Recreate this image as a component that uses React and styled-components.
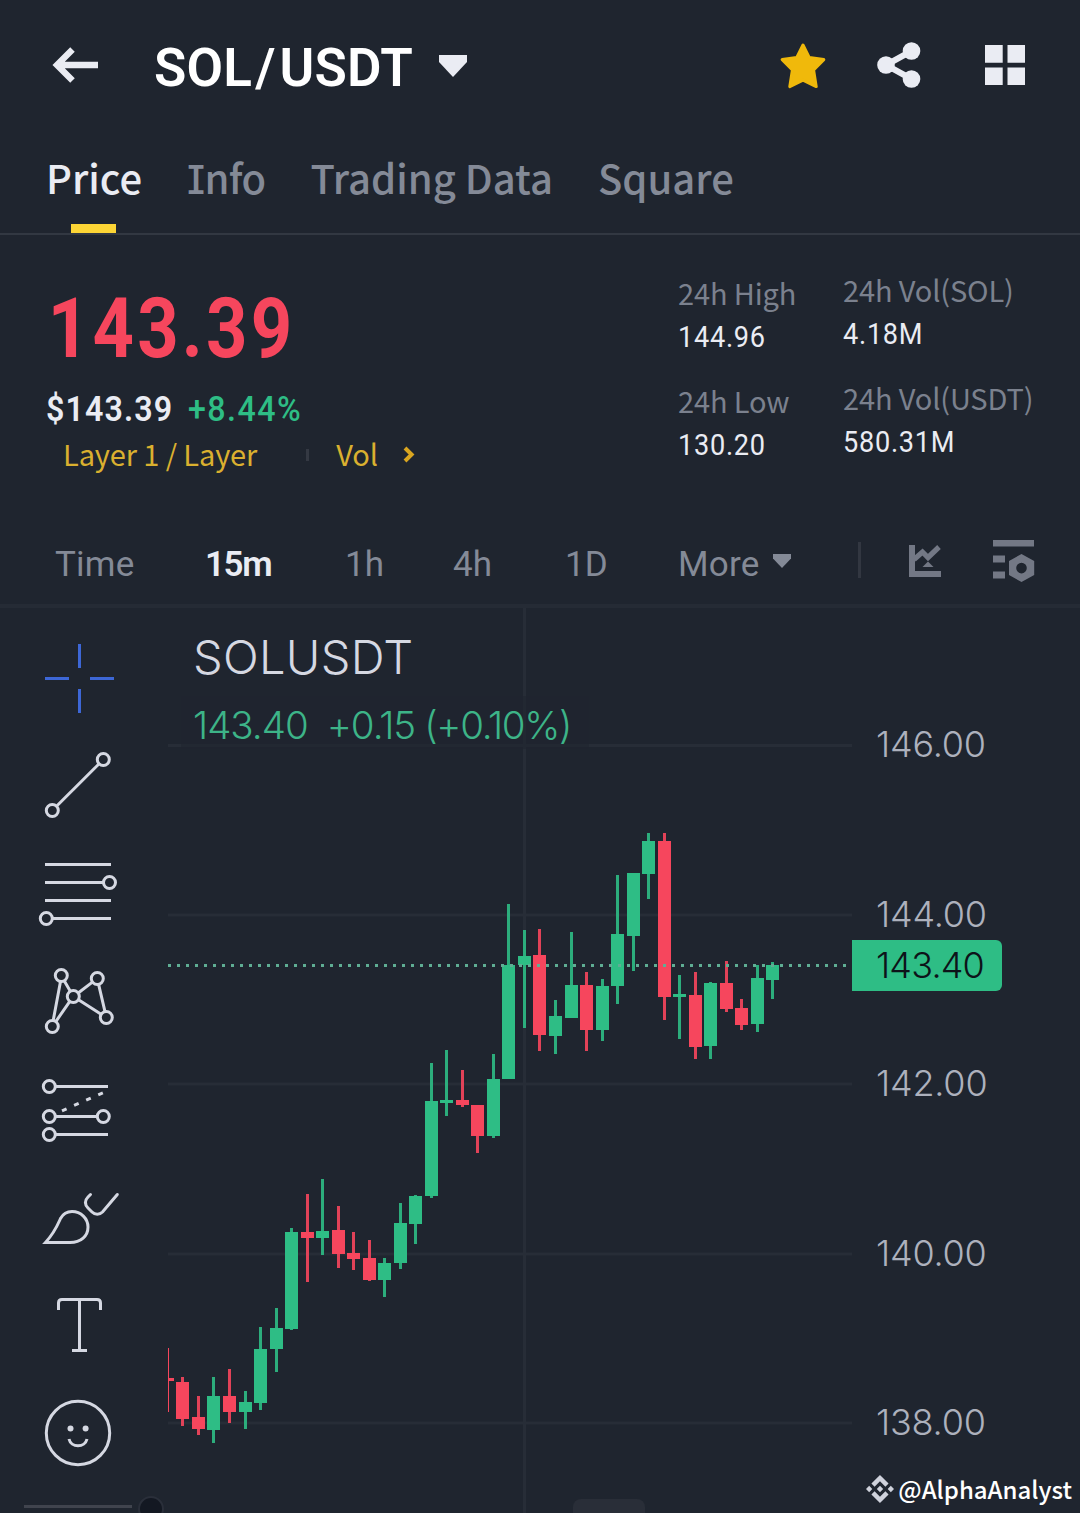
import React from "react";
import styled, { createGlobalStyle } from "styled-components";
import { SiBinance } from "react-icons/si";

const sans = `"Noto Sans CJK SC", "Noto Sans", sans-serif`;
const digits = `Roboto, "Liberation Sans", sans-serif`;
const chartFont = `Inter, "Liberation Sans", sans-serif`;

const colors = {
  bg: "#1f252f",
  white: "#eaecf3",
  grey: "#848a97",
  line: "#323842",
  grid: "#272d37",
  up: "#2ebd85",
  down: "#f6465d",
  yellow: "#f0b90b",
  icon: "#d5d8e2",
};

const tabs = [
  { label: "Price", active: true },
  { label: "Info", tracking: "-0.7px" },
  { label: "Trading Data" },
  { label: "Square" },
];

const stats = [
  [
    { label: "24h High", value: "144.96" },
    { label: "24h Low", value: "130.20" },
  ],
  [
    { label: "24h Vol(SOL)", value: "4.18M" },
    { label: "24h Vol(USDT)", value: "580.31M" },
  ],
];

const axis = ["146.00", "144.00", "142.00", "140.00", "138.00"];
const gridLines = [745.5, 915, 1084, 1254, 1423];

// x, wick top, body top, body bottom, wick bottom, up
const candles = [
  [176, 1377, 1382, 1419, 1426, 0],
  [192, 1396, 1417, 1429, 1435, 0],
  [207, 1377, 1396, 1430, 1443, 1],
  [223, 1369, 1396, 1412, 1423, 0],
  [239, 1391, 1402, 1412, 1429, 1],
  [254, 1327, 1349, 1403, 1410, 1],
  [270, 1308, 1328, 1349, 1372, 1],
  [285, 1228, 1232, 1329, 1330, 1],
  [301, 1194, 1232, 1238, 1282, 0],
  [316, 1179, 1231, 1238, 1255, 1],
  [332, 1206, 1230, 1254, 1268, 0],
  [347, 1232, 1253, 1259, 1270, 0],
  [363, 1240, 1258, 1280, 1281, 0],
  [378, 1258, 1263, 1280, 1297, 1],
  [394, 1203, 1223, 1263, 1269, 1],
  [409, 1195, 1196, 1224, 1244, 1],
  [425, 1063, 1101, 1196, 1198, 1],
  [440, 1050, 1100, 1103, 1116, 1],
  [456, 1070, 1100, 1105, 1107, 0],
  [471, 1105, 1105, 1136, 1153, 0],
  [487, 1054, 1079, 1136, 1138, 1],
  [502, 904, 965, 1079, 1079, 1],
  [518, 930, 956, 965, 1028, 1],
  [533, 929, 955, 1035, 1051, 0],
  [549, 1000, 1016, 1036, 1054, 1],
  [565, 932, 985, 1018, 1018, 1],
  [580, 972, 985, 1030, 1051, 0],
  [596, 979, 986, 1030, 1041, 1],
  [611, 875, 934, 986, 1004, 1],
  [627, 873, 873, 936, 971, 1],
  [642, 833, 841, 874, 899, 1],
  [658, 833, 841, 997, 1020, 0],
  [673, 975, 994, 997, 1039, 1],
  [689, 972, 995, 1047, 1059, 0],
  [704, 982, 983, 1046, 1059, 1],
  [720, 961, 983, 1009, 1012, 0],
  [735, 999, 1008, 1025, 1030, 0],
  [751, 965, 978, 1024, 1032, 1],
  [766, 962, 965, 980, 999, 1],
];

const tools = [
  {
    name: "cross",
    active: true,
    art: <path d="M55.5 19V43M55.5 64V88M21 53.5H45M66 53.5H90" />,
  },
  {
    name: "trend line",
    art: (
      <>
        <path d="M33 72.8L74.6 31.2" />
        <circle cx="79.3" cy="26.5" r="6" />
        <circle cx="28.3" cy="77.5" r="6" />
      </>
    ),
  },
  {
    name: "fib retracement",
    art: (
      <>
        <path d="M21 23.5H87M21 41.5H79.5M21 59.5H87M28.5 77.5H87" />
        <circle cx="85.5" cy="41.5" r="6" />
        <circle cx="22.3" cy="77.5" r="6" />
      </>
    ),
  },
  {
    name: "pattern",
    art: (
      <>
        <path d="M40.2 31.7L46.3 42.3M54.2 44L68.4 33.1M74.6 35.4L81 62.6M54.5 50.7L77.1 65.2M36.5 32.5L29.2 71.5M45.8 52.3L31.8 72.6" />
        <circle cx="37.3" cy="26.5" r="6" />
        <circle cx="73.3" cy="29.5" r="6" />
        <circle cx="49.3" cy="47.5" r="6" />
        <circle cx="28.3" cy="77.5" r="6" />
        <circle cx="82.3" cy="68.5" r="6" />
      </>
    ),
  },
  {
    name: "projection",
    art: (
      <>
        <path d="M31.3 29.5H84M31.3 59.5H73.3M31.3 77.5H84" />
        <path d="M38 53.8L79.5 35.6" strokeDasharray="5 8.2" />
        <circle cx="25.3" cy="29.5" r="6" />
        <circle cx="25.3" cy="59.5" r="6" />
        <circle cx="79.3" cy="59.5" r="6" />
        <circle cx="25.3" cy="77.5" r="6" />
      </>
    ),
  },
  {
    name: "brush",
    art: (
      <>
        <path d="M21.5 77.5C31 67 34 59 36.5 53.5C39 49 43 46.5 48 46.5C57 46.5 64 53.5 64 62C64 71 57 77.5 46 77.5Z" />
        <path
          strokeLinecap="round"
          d="M66.5 29.5L64 32C60.5 35.5 60.5 39.5 64 43L68 47C71 50 75.5 50 78.5 47L93.3 29.5"
        />
      </>
    ),
  },
  {
    name: "text",
    art: (
      <path d="M34.5 37V30Q34.5 26.5 38 26.5H73Q76.5 26.5 76.5 30V37M55.5 26.5V77.5M48 77.5H63" />
    ),
  },
  {
    name: "emoji",
    art: (
      <>
        <circle cx="54" cy="52" r="31.7" />
        <circle cx="46.5" cy="47.5" r="3" fill={colors.icon} stroke="none" />
        <circle cx="61.6" cy="47.5" r="3" fill={colors.icon} stroke="none" />
        <path d="M45 58C47 67 61 67 63 58" />
      </>
    ),
  },
];

function Header() {
  return (
    <HeaderBar>
      <BackIcon width="46" height="36" viewBox="0 0 46 36">
        <path
          d="M46 18H5M20.5 2.5L5 18L20.5 33.5"
          fill="none"
          stroke={colors.white}
          strokeWidth="6.4"
        />
      </BackIcon>
      <Title>
        SOL<Slash>/</Slash>USDT
      </Title>
      <Caret width="28" height="22" viewBox="0 0 28 22">
        <path d="M0 0H28V7L14 22L0 7Z" fill={colors.white} />
      </Caret>
      <Actions>
        <svg width="46" height="46" viewBox="0 0 46 46">
          <path
            d="M23 2L29.3 14.6L43.8 16.6L33.6 27L36.2 43.6L23 37.2L9.8 43.6L12.4 27L2.2 16.6L16.7 14.6Z"
            fill={colors.yellow}
            stroke={colors.yellow}
            strokeWidth="3"
            strokeLinejoin="round"
          />
        </svg>
        <svg width="44" height="46" viewBox="0 0 44 46">
          <path
            d="M34.5 9L9 23L34.5 37"
            fill="none"
            stroke={colors.white}
            strokeWidth="6"
          />
          <circle cx="34.5" cy="9" r="8.8" fill={colors.white} />
          <circle cx="9" cy="23" r="8.8" fill={colors.white} />
          <circle cx="34.5" cy="37" r="8.8" fill={colors.white} />
        </svg>
        <svg width="40" height="40" viewBox="0 0 40 40">
          <path
            d="M0 0H17.7V17.7H0ZM22.5 0H40V17.7H22.5ZM0 22.5H17.7V40H0ZM22.5 22.5H40V40H22.5Z"
            fill={colors.white}
          />
        </svg>
      </Actions>
    </HeaderBar>
  );
}

function Tabs() {
  return (
    <TabBar>
      {tabs.map((t) => (
        <Tab key={t.label} $active={t.active} $tracking={t.tracking}>
          {t.label === "Info" ? (
            <>
              <SlabI>I</SlabI>nfo
            </>
          ) : (
            t.label
          )}
        </Tab>
      ))}
    </TabBar>
  );
}

function Ticker() {
  return (
    <TickerWrapper>
      <PriceBlock>
        <LastPrice>143.39</LastPrice>
        <Fiat>
          <span>$143.39</span>
          <Change>+8.44%</Change>
        </Fiat>
        <Tags>
          <span>Layer 1 / Layer</span>
          <TagDivider />
          <span>Vol</span>
          <svg width="12" height="17" viewBox="0 0 12 17">
            <path
              d="M2 2L8.6 8.5L2 15"
              fill="none"
              stroke="#d9a520"
              strokeWidth="4"
            />
          </svg>
        </Tags>
      </PriceBlock>
      {stats.map((col, i) => (
        <StatColumn key={i} $raised={i === 1}>
          {col.map((s) => (
            <Stat key={s.label}>
              <StatLabel>{s.label}</StatLabel>
              <StatValue>{s.value}</StatValue>
            </Stat>
          ))}
        </StatColumn>
      ))}
    </TickerWrapper>
  );
}

function Intervals() {
  return (
    <IntervalBar>
      <Interval>Time</Interval>
      <Interval $active>15m</Interval>
      <Interval>1h</Interval>
      <Interval>4h</Interval>
      <Interval>1D</Interval>
      <Interval>
        More
        <svg width="18" height="14" viewBox="0 0 18 14">
          <path d="M0 0H18V4.5L9 14L0 4.5Z" fill={colors.grey} />
        </svg>
      </Interval>
      <BarDivider />
      <svg width="32" height="32" viewBox="0 0 32 32">
        <g fill="none" stroke="#737885">
          <path d="M3 0V32M0 29H32" strokeWidth="6" />
          <path d="M5 14.5L13.5 7L19 12.5L30 2" strokeWidth="5.2" />
        </g>
        <path d="M13.5 22L19 16.5L24.5 22Z" fill="#737885" />
      </svg>
      <svg width="42" height="42" viewBox="0 0 42 42">
        <path
          fill="#737885"
          fillRule="evenodd"
          d="M0 0H41V6.6H0ZM0 15.5H12V22.5H0ZM0 31.5H12V38.5H0ZM28.5 14L41.2 21V35L28.5 42L16 35V21ZM28.5 22.8A5.3 5.3 0 1 0 28.5 33.4A5.3 5.3 0 1 0 28.5 22.8Z"
        />
      </svg>
    </IntervalBar>
  );
}

function Plot() {
  return (
    <svg width="684" height="905" viewBox="168 608 684 905">
      {gridLines.map((y) => (
        <path key={y} d={`M168 ${y}H852`} stroke={colors.grid} strokeWidth="3" />
      ))}
      <path d="M524.5 600V1513" stroke={colors.grid} strokeWidth="3" />
      <rect x="181" y="696" width="408" height="53" fill={colors.bg} opacity="0.55" />
      <path d="M168.5 1348V1412" stroke={colors.down} strokeWidth="1" />
      <path d="M168 1379.5H174" stroke={colors.down} strokeWidth="3" />
      {candles.map(([x, high, top, bottom, low, up]) => (
        <g key={x} fill={up ? colors.up : colors.down}>
          <rect x={x + 5} y={high} width="3" height={low - high} opacity="0.9" />
          <rect x={x} y={top} width="13" height={bottom - top} />
        </g>
      ))}
      <path
        d="M168 965.5H852"
        stroke="#5fae94"
        strokeWidth="3"
        strokeDasharray="3 6"
      />
      <rect x="573" y="1499" width="72" height="30" rx="8" fill="#292e38" />
    </svg>
  );
}

function Chart() {
  return (
    <ChartWrapper>
      <Toolbar>
        {tools.map((t) => (
          <Tool key={t.name} viewBox="0 0 108 108" $active={t.active}>
            {t.art}
          </Tool>
        ))}
        <ToolbarEnd>
          <Knob />
        </ToolbarEnd>
      </Toolbar>
      <PlotArea>
        <Plot />
        <Legend>
          <LegendName>SOLUSDT</LegendName>
          <LegendValues>
            <span>143.40</span>
            <span>+0.15</span>
            <span>(+0.10%)</span>
          </LegendValues>
        </Legend>
      </PlotArea>
      <Axis>
        {axis.map((a) => (
          <AxisLabel key={a}>{a}</AxisLabel>
        ))}
        <PriceTag>143.40</PriceTag>
      </Axis>
      <Watermark>
        <SiBinance size={28} color="#cfd2dc" />
        @AlphaAnalyst
      </Watermark>
    </ChartWrapper>
  );
}

function App() {
  return (
    <Page>
      <GlobalStyle />
      <Header />
      <Tabs />
      <Ticker />
      <Intervals />
      <Chart />
    </Page>
  );
}

const GlobalStyle = createGlobalStyle`
  * {
    box-sizing: border-box;
  }

  body {
    margin: 0;
    background: ${colors.bg};
  }

  svg {
    display: block;
    flex-shrink: 0;
  }
`;

const Page = styled.div`
  width: 1080px;
  height: 1513px;
  overflow: hidden;
  background: ${colors.bg};
  color: ${colors.white};
  font-family: ${sans};
`;

const HeaderBar = styled.header`
  display: flex;
  align-items: center;
  height: 130px;
  padding: 0 55px 0 52px;
`;

const BackIcon = styled.svg`
  margin-right: 56px;
`;

const Title = styled.h1`
  margin: 5px 0 0;
  width: 263px;
  font-family: ${digits};
  font-size: 53px;
  font-weight: 600;
  line-height: 60px;
  letter-spacing: 0.2px;
  white-space: nowrap;
  color: #fff;
`;

const Slash = styled.span`
  margin: 0 4px 0 3px;
`;

const Caret = styled.svg`
  margin-left: 22px;
  margin-top: 2px;
`;

const Actions = styled.div`
  display: flex;
  align-items: center;
  margin-left: auto;

  svg:nth-child(1) {
    margin-right: 51px;
    margin-top: 2px;
  }

  svg:nth-child(2) {
    margin-right: 64px;
  }
`;

const TabBar = styled.nav`
  display: flex;
  align-items: center;
  gap: 45px;
  height: 105px;
  padding: 0 46px;
  border-bottom: 2px solid ${colors.line};
`;

const Tab = styled.a`
  position: relative;
  height: 103px;
  font-size: 40px;
  font-weight: 500;
  line-height: 95px;
  letter-spacing: ${(props) => props.$tracking || "0"};
  white-space: nowrap;
  color: ${(props) => (props.$active ? colors.white : colors.grey)};

  &::after {
    content: "";
    display: ${(props) => (props.$active ? "block" : "none")};
    position: absolute;
    left: 50%;
    bottom: 0;
    width: 45px;
    height: 9px;
    margin-left: -23px;
    background: #fcd535;
  }
`;

const SlabI = styled.span`
  font-family: ${chartFont};
  font-feature-settings: "cv08";
`;

const TickerWrapper = styled.section`
  display: flex;
  height: 287px;
  padding: 38px 0 0 46px;
`;

const PriceBlock = styled.div`
  width: 632px;
`;

const LastPrice = styled.div`
  height: 108px;
  padding-left: 2px;
  font-family: ${digits};
  font-size: 84px;
  font-weight: 700;
  line-height: 112px;
  letter-spacing: 3.8px;
  transform: scaleX(0.86);
  transform-origin: 0 0;
  color: ${colors.down};
`;

const Fiat = styled.div`
  display: flex;
  gap: 16px;
  height: 52px;
  font-family: ${digits};
  font-size: 35px;
  font-weight: 600;
  line-height: 57px;
  letter-spacing: 1.2px;
  transform: scaleX(0.92);
  transform-origin: 0 0;
`;

const Change = styled.span`
  font-weight: 500;
  letter-spacing: 1.6px;
  color: ${colors.up};
`;

const Tags = styled.div`
  display: flex;
  align-items: center;
  height: 44px;
  margin-top: -2px;
  padding-left: 17px;
  font-size: 29px;
  line-height: 44px;
  letter-spacing: -0.1px;
  color: #dab02f;

  svg {
    margin-top: 3px;
    margin-left: 25px;
  }
`;

const TagDivider = styled.i`
  width: 3px;
  height: 12px;
  margin: 3px 27px 0 49px;
  background: #343943;
`;

const StatColumn = styled.div`
  width: 165px;
  margin-top: ${(props) => (props.$raised ? "-3px" : "0")};
  white-space: nowrap;
`;

const Stat = styled.div`
  height: 108px;
`;

const StatLabel = styled.div`
  height: 42px;
  font-size: 29px;
  font-weight: 400;
  line-height: 38px;
  letter-spacing: -0.15px;
  color: #7b818e;
`;

const StatValue = styled.div`
  font-family: ${digits};
  font-size: 29.5px;
  line-height: 44px;
  letter-spacing: 0.8px;
  transform: scaleX(0.92);
  transform-origin: 0 0;
`;

const IntervalBar = styled.div`
  display: grid;
  grid-template-columns: 150px 140px 108px 112px 113px 180px 51px 84px 42px;
  align-items: center;
  height: 86px;
  padding: 0 44px 4px 55px;
  border-bottom: 4px solid #252b35;
`;

const Interval = styled.span`
  display: flex;
  align-items: center;
  gap: 14px;
  padding-top: 8px;
  font-family: ${digits};
  font-size: 35px;
  font-weight: ${(props) => (props.$active ? 600 : 400)};
  line-height: 50px;
  letter-spacing: ${(props) => (props.$active ? "-1.4px" : "0.2px")};
  color: ${(props) => (props.$active ? colors.white : colors.grey)};

  svg {
    margin-top: -9px;
  }
`;

const BarDivider = styled.i`
  width: 3px;
  height: 36px;
  margin-top: -2px;
  background: #323741;
`;

const ChartWrapper = styled.section`
  position: relative;
  display: flex;
  height: 905px;
`;

const Toolbar = styled.aside`
  display: flex;
  flex-direction: column;
  width: 168px;
  padding: 17px 0 0 24px;
`;

const Tool = styled.svg`
  width: 108px;
  height: 108px;
  fill: none;
  stroke: ${(props) => (props.$active ? "#3d67d6" : colors.icon)};
  stroke-width: 3;
`;

const ToolbarEnd = styled.div`
  position: relative;
  width: 108px;
  height: 3px;
  margin-top: 16px;
  background: #40444e;
`;

const Knob = styled.i`
  position: absolute;
  left: 114px;
  top: -9px;
  width: 26px;
  height: 26px;
  border: 2px solid #2a2f3a;
  border-radius: 50%;
  background: #131822;
`;

const PlotArea = styled.div`
  position: relative;
  width: 684px;
`;

const Legend = styled.div`
  position: absolute;
  left: 25px;
  top: 20px;
  font-family: ${chartFont};
  font-weight: 300;
  white-space: nowrap;
`;

const LegendName = styled.div`
  height: 64px;
  font-size: 47px;
  line-height: 58px;
  letter-spacing: 0.3px;
  color: ${colors.icon};
`;

const LegendValues = styled.div`
  display: flex;
  font-size: 38.5px;
  line-height: 66px;
  letter-spacing: -1px;
  color: #3db488;

  span:nth-child(2) {
    margin: 0 9px 0 19px;
  }

  span:nth-child(3) {
    letter-spacing: -1.3px;
  }
`;

const Axis = styled.div`
  position: relative;
  display: flex;
  flex-direction: column;
  width: 228px;
  padding: 107px 0 0 24px;
  font-family: ${chartFont};
  font-size: 36px;
  font-weight: 300;
  letter-spacing: -0.2px;
`;

const AxisLabel = styled.div`
  flex-shrink: 0;
  height: 169.5px;
  line-height: 58px;
  color: #adb1bd;
`;

const PriceTag = styled.div`
  position: absolute;
  left: 0;
  top: 332px;
  width: 150px;
  height: 51px;
  padding-left: 24px;
  border-radius: 0 6px 6px 0;
  line-height: 51px;
  letter-spacing: -0.8px;
  background: ${colors.up};
  color: #0d1319;
`;

const Watermark = styled.div`
  position: absolute;
  right: 8px;
  bottom: 6px;
  display: flex;
  align-items: center;
  gap: 4px;
  font-size: 24px;
  font-weight: 500;
  line-height: 36px;
  color: #fff;
`;

export default App;
